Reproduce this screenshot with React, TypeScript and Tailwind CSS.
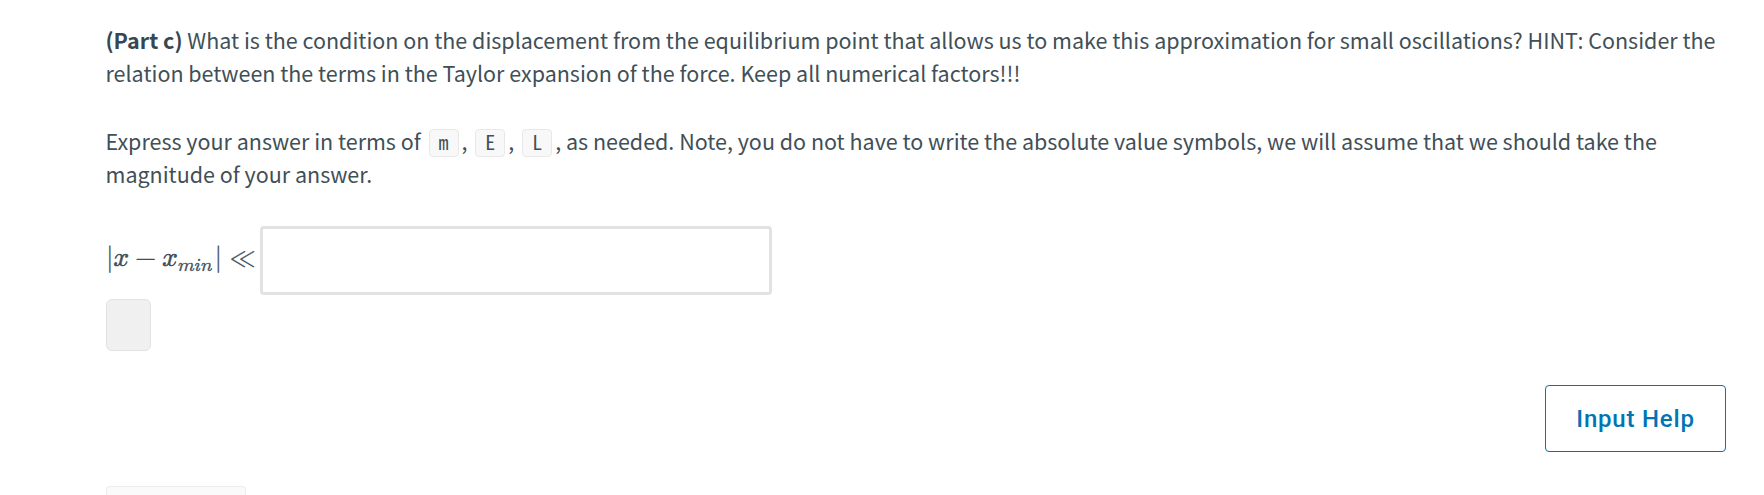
import { useState } from "react";
import type { ReactNode } from "react";

const Variable = ({ children }: { children: ReactNode }) => (
  <code className="relative -top-[1.5px] -my-1 mr-[3px] ml-[3px] inline-flex h-[28px] w-[30px] items-center justify-center rounded border border-[#e8e8e8] bg-[#f8f8f8] pb-[1px] align-middle font-['Noto_Sans_Mono_CJK_SC','DejaVu_Sans_Mono',monospace] text-[20px] leading-none">
    {children}
  </code>
);

const Inequality = () => (
  <div className="h-[69px] w-[154px] shrink-0 font-['Latin_Modern_Math','Liberation_Serif',serif] text-[27.3px] leading-[63.5px] whitespace-nowrap [-webkit-text-stroke:0.2px]">
    <span>|</span>
    <span className="[-webkit-text-stroke:0.6px]">𝑥</span>
    <span className="mx-[5.9px]">−</span>
    <span className="[-webkit-text-stroke:0.6px]">𝑥</span>
    <sub className="bottom-[-5px] text-[19px] leading-none [-webkit-text-stroke:0.4px]">𝑚𝑖𝑛</sub>
    <span className="ml-[2px]">|</span>
    <span className="ml-[7px]">≪</span>
  </div>
);

const App = () => {
  const [answer, setAnswer] = useState("");

  return (
    <main className="h-[495px] overflow-hidden bg-white pt-[23px] pr-[38px] pl-[106px] font-['Noto_Sans_CJK_SC',sans-serif] text-[21.49px] leading-[33px] text-[#414f57]">
      <p className="-ml-[0.5px] whitespace-nowrap">
        <strong className="font-bold text-[#37474f]">(Part c)</strong> What is the condition on the displacement from the equilibrium point that allows us to make this approximation for small oscillations? HINT: Consider the
        <br />
        relation between the terms in the Taylor expansion of the force. Keep all numerical factors!!!
      </p>

      <p className="mt-[35px] -ml-[0.5px] whitespace-nowrap">
        Express your answer in terms of <Variable>m</Variable>, <Variable>E</Variable>, <Variable>L</Variable>, as needed. Note, you do not have to write the absolute value symbols, we will assume that we should take the
        <br />
        magnitude of your answer.
      </p>

      {/* Answer field */}
      <div className="mt-[36px] flex items-center">
        <Inequality />
        <input
          type="text"
          value={answer}
          onChange={(e) => setAnswer(e.target.value)}
          className="h-[69px] w-[512px] rounded border-3 border-[#e2e2e2] bg-white px-4 outline-none"
        />
      </div>
      <div className="mt-1 h-[52px] w-[45px] rounded-md border border-[#e2e2e2] bg-[#f0f0f0]" />

      <div className="mt-[34px] flex justify-end">
        <button
          type="button"
          className="h-[67px] w-[181px] rounded border border-[#0075b4] bg-white pt-[2px] font-['Roboto',sans-serif] text-[24px] font-medium tracking-[0.8px] text-[#0075b4]"
        >
          Input Help
        </button>
      </div>

      {/* Submit bar, cut off by the frame */}
      <div className="mt-[34px] h-[60px] w-[140px] rounded border border-[#ececec] bg-[#fafafa]" />
    </main>
  );
};

export default App;
